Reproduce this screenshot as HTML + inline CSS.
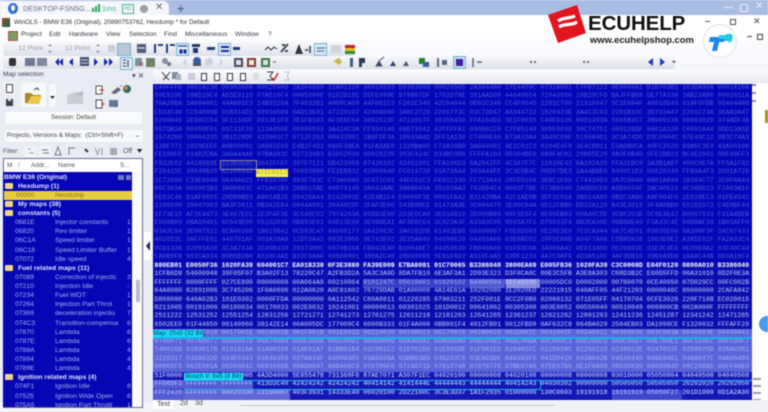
<!DOCTYPE html>
<html><head><meta charset="utf-8"><style>
html,body{margin:0;padding:0;width:768px;height:412px;overflow:hidden;background:#f3f4f8}
#w{position:absolute;left:0;top:0;width:768px;height:412px;overflow:hidden;filter:blur(.45px);font-family:"Liberation Sans",sans-serif;color:#333}
.a{position:absolute;white-space:nowrap}
.m{font-size:6.700px;color:#3a3a44;top:31px}
.h{position:absolute;left:153px;width:599px;overflow:hidden;margin:0}
.h pre{margin:0 0 0 1.500px;font:6.57px/8.48px "Liberation Mono",monospace}
.t{position:absolute;left:0;width:130px;height:9.13px;font-size:6.800px;line-height:9px;color:#a3b0ee;white-space:nowrap;overflow:hidden}
.t b{position:absolute;left:12px;font-weight:normal}
.t i{position:absolute;left:15px;font-style:normal}
.t u{position:absolute;left:52px;text-decoration:none;width:68px;overflow:hidden}
.t s{position:absolute;left:124px;text-decoration:none}
.g{color:#dde2fb;font-weight:bold}
.g i{left:15px}
.f{position:absolute;left:2px;top:1px;width:8px;height:6px;background:#f0d884;border-radius:1px}
</style></head><body><div id="w">
<div class="a" style="left:0;top:0;width:768px;height:15px;background:#a9bde3"></div>
<div class="a" style="left:0;top:1px;width:169px;height:15px;background:#f4f6fb;border-radius:0 6px 0 0"></div>
<div class="a" style="left:0;top:15px;width:768px;height:15px;background:#fff"></div>
<div class="a" style="left:0;top:30px;width:768px;height:42px;background:linear-gradient(#fff,#f4f6fc)"></div>
<div class="a" style="left:8px;top:3px;width:10px;height:11px;border-radius:50%;background:#2a6fe0"></div>
<div class="a" style="left:11px;top:5px;width:4px;height:6px;border-radius:50%;background:#fff"></div>
<div class="a" style="left:23px;top:4px;font-size:7.300px;color:#5f6a80">DESKTOP-FSN5G...</div>
<div class="a" style="left:92px;top:8px;width:2px;height:4px;background:#2fa558"></div><div class="a" style="left:95px;top:6px;width:2px;height:6px;background:#2fa558"></div><div class="a" style="left:98px;top:4px;width:2px;height:8px;background:#2fa558"></div>
<div class="a" style="left:102px;top:4px;font-size:7.500px;color:#3bb56c">1ms</div>
<div class="a" style="left:122px;top:4px;width:10px;height:8px;border:1px solid #3bb59c;font-size:5px;line-height:8px;color:#3bb56c;text-align:center">HD</div>
<div class="a" style="left:140px;top:5px;width:8px;height:8px;border-radius:50%;background:#9aa0aa"></div>
<div class="a" style="left:155px;top:2px;font-size:10px;color:#666">✕</div>
<div class="a" style="left:177px;top:1px;font-size:13px;font-weight:bold;color:#5f6f90">+</div>
<div class="a" style="left:724px;top:7px;width:9px;height:1px;background:#eef"></div>
<div class="a" style="left:740px;top:4px;width:6px;height:6px;border:1px solid #eef"></div>
<div class="a" style="left:755px;top:1px;font-size:10px;color:#eef">✕</div>
<div class="a" style="left:2px;top:18px;width:8px;height:9px;background:linear-gradient(135deg,#b33,#463 60%,#246)"></div>
<div class="a" style="left:14px;top:19px;font-size:6.400px;color:#333">WinOLS - BMW E36 (Original), 20890753762, Hexdump * for Default</div>
<div class="a" style="left:705px;top:21px;width:5px;height:1px;background:#555"></div>
<div class="a" style="left:730px;top:19px;width:4px;height:4px;border:1px solid #555"></div>
<div class="a" style="left:753px;top:16px;font-size:9px;color:#444">✕</div>
<div class="a" style="left:8px;top:31px;width:8px;height:8px;background:#7c9c5c;border:1px solid #a55"></div>
<div class="a m" style="left:21px">Project</div><div class="a m" style="left:49px">Edit</div><div class="a m" style="left:69px">Hardware</div><div class="a m" style="left:106px">View</div><div class="a m" style="left:129px">Selection</div><div class="a m" style="left:164px">Find</div><div class="a m" style="left:185px">Miscellaneous</div><div class="a m" style="left:235px">Window</div><div class="a m" style="left:268px">?</div>
<div class="a" style="left:3px;top:42px;width:352px;height:14px;background:linear-gradient(#f6f7fb,#dfe2ea);border-radius:3px"></div>
<div class="a" style="left:3px;top:56px;width:672px;height:13px;background:linear-gradient(#f7f8fc,#dcdfe8);border-radius:3px"></div>
<div class="a" style="left:18px;top:45px;font-size:6.800px;color:#999">12 Point</div><div class="a" style="left:65px;top:45px;font-size:6.800px;color:#999">12 Point</div>
<svg class="a" style="left:0;top:0" width="768" height="84" viewBox="0 0 768 84">
<g fill="#888"><path d="M48 46l2-2 2 2zM48 51l2 2 2-2zM96 46l2-2 2 2zM96 51l2 2 2-2z"/></g>
<g fill="#c8cdd8"><rect x="108" y="45" width="7" height="7"/></g>
<rect x="117.500" y="43.500" width="13" height="12" fill="#bcc7d8" stroke="#6eb4d2"/>
<rect x="137" y="44" width="9" height="9" fill="#52607e"/><path d="M138 48h7" stroke="#fff"/>
<g fill="#233c70"><rect x="154" y="44" width="2" height="9"/><rect x="158" y="44" width="5" height="2"/><rect x="166" y="44" width="2" height="9"/><rect x="170" y="44" width="5" height="2"/><rect x="192" y="44" width="8" height="3"/><rect x="193" y="48" width="5" height="5"/><rect x="207" y="47" width="8" height="3"/><rect x="218" y="47" width="6" height="3"/><rect x="233" y="47" width="7" height="3"/></g>
<rect x="176.500" y="43.500" width="12" height="12" fill="#dbe5f2" stroke="#6eb4d2"/><path d="M178 46h9M180 50h2v3h-2zM184 50h2v3h-2z" stroke="#142a90" fill="#142a90"/>
<rect x="218.500" y="43.500" width="12" height="12" fill="#dbe5f2" stroke="#6eb4d2"/><path d="M221 47h8M221 51h8" stroke="#1a2aa0" stroke-width="2"/>
<path d="M265 50l3-3 3 3 3-3 3 2" stroke="#233" fill="none"/>
<path d="M281 52l7-8M282 45h3M285 51h3" stroke="#445" stroke-width="2"/><path d="M295 54l4-10 4 10z" fill="#334" />
<path d="M305 50h3M310 46v7" stroke="#334" stroke-width="1.500"/>
<rect x="314.500" y="43.500" width="12" height="12" fill="#dbe5f2" stroke="#6eb4d2"/><path d="M317 48h8M317 51h7" stroke="#3b5a90"/>
<rect x="331" y="45" width="10" height="8" fill="#d0d2d8"/>
<path d="M345 45h10v3h-10z" fill="#c82020"/><path d="M345 48h10v3h-10z" fill="#e0c020"/><path d="M345 51h10v3h-10z" fill="#2a8a3a"/>
<rect x="9" y="58" width="7" height="8" rx="2" fill="#333"/><rect x="25" y="58" width="10" height="8" fill="#6e7a96"/><rect x="37" y="58" width="10" height="8" fill="#7d879e"/>
<g fill="#1428a8"><path d="M55 62l4-4v8zM59 62l4-4v8zM69 62l4-4v8z"/><path d="M94 58l4 4-4 4zM104 58l4 4-4 4zM109 58l4 4-4 4z"/></g>
<rect x="80" y="57" width="9" height="9" fill="#4a5878"/><path d="M81 60h7M81 63h7" stroke="#ccd"/>
<rect x="120.500" y="57.500" width="12" height="12" fill="#dfe8f2" stroke="#6eb4d2"/><path d="M123 60h3M123 63h3M123 66h3M128 60v7" stroke="#233a60"/>
<rect x="135" y="58" width="7" height="8" fill="#7d92a2"/><circle cx="141" cy="64" r="2" fill="#a67"/>
<rect x="146" y="58" width="9" height="9" fill="#6e8468"/>
<circle cx="165" cy="61" r="3" fill="#8492a8"/><circle cx="169" cy="64" r="2" fill="#778"/>
<path d="M183 62l3-4v8z" fill="#ccd"/><circle cx="197" cy="61" r="4" fill="#3a5aa0"/><rect x="193" y="63" width="8" height="3" fill="#4a5468"/><circle cx="209" cy="62" r="4" fill="#d0d2d8"/><path d="M220 58l3 4-3 4z" fill="#ccd"/>
<rect x="234" y="58" width="9" height="9" fill="#4a4a5a"/><rect x="236" y="60" width="5" height="5" fill="#dde"/>
<rect x="247" y="58" width="9" height="9" fill="#883a34"/><rect x="249" y="60" width="5" height="5" fill="#eed"/>
<rect x="261" y="58" width="9" height="9" fill="#3c7a44"/><rect x="263" y="60" width="5" height="5" fill="#dde"/>
<path d="M273 62h3" stroke="#555"/>
<path d="M333 61l6-3 3 4-3 3-3-2z" fill="#c8b848"/><path d="M350 58h3v9h-3z" fill="#3a6a7a"/><path d="M359 58h6v5h-3v4h-3z" fill="#2a3a5a"/>
<path d="M376 66l3-5 3 5zM379 61l5-4" fill="#2a4a9a" stroke="#556"/><path d="M390 66l3-5 3 5z" fill="#2a3a6a"/><path d="M403 66l3-5 3 5z" fill="#4a5a7a"/>
<rect x="419" y="58" width="6" height="6" fill="#2a7a3a"/><rect x="423" y="62" width="6" height="5" fill="#3a5a9a"/>
<path d="M437 58h2v9h-2zM442 60h5v5h-5z" fill="#5a6a80"/>
<rect x="453.500" y="56.500" width="12" height="12" fill="#c8d8ea" stroke="#6eb4d2"/><rect x="456" y="59" width="7" height="7" fill="#4020b0"/>
<path d="M473 58v9M477 62h5" stroke="#556a80" stroke-width="1.500"/>
<path d="M648 62l5-4v8z" fill="#1a3ac0"/><path d="M660 58l5 4-5 4z" fill="#1a3ac0"/><path d="M672 61h4l-2 2z" fill="#333"/>
<g fill="#667"><rect x="530" y="61" width="2" height="2"/><rect x="534" y="61" width="2" height="2"/><rect x="583" y="61" width="2" height="2"/><rect x="587" y="61" width="2" height="2"/></g>
</svg>
<div class="a" style="left:0;top:70px;width:153px;height:332px;background:#e9ecf3"></div>
<div class="a" style="left:3px;top:71px;font-size:6.600px;color:#444">Map selection</div>
<div class="a" style="left:132px;top:71px;font-size:7.500px;color:#444">▾ ✕</div>
<div class="a" style="left:153px;top:70px;width:615px;height:13px;background:linear-gradient(#fbfcfe,#e5e8f0)"></div>
<svg class="a" style="left:153px;top:70px" width="260" height="13" viewBox="153 70 260 13">
<path d="M162 72l4 5 4-5M163 80l3-3 3 3" stroke="#334" fill="none"/><rect x="172" y="72" width="6" height="7" fill="#7d8aa0"/><rect x="176" y="74" width="5" height="6" fill="#a8b0c0"/><rect x="188" y="73" width="7" height="7" fill="#ccd"/>
<g fill="#fff" stroke="#334"><rect x="201.500" y="73.500" width="5" height="7"/><rect x="214.500" y="73.500" width="5" height="7"/><rect x="227.500" y="73.500" width="5" height="7"/><rect x="240.500" y="73.500" width="5" height="7"/></g><rect x="253" y="73" width="6" height="7" fill="#d8dae2"/>
<path d="M267 72h6l-3 4 3 4h-6" stroke="#334" fill="none"/><path d="M272 78l2 2 4-7" stroke="#d02020" fill="none" stroke-width="1.500"/><path d="M284 72h5l-2 4 2 4h-5" stroke="#bbc" fill="none"/>
</svg>
<!-- session panel -->
<svg class="a" style="left:0;top:82px" width="153" height="30" viewBox="0 82 153 30">
<rect x="4" y="82" width="10" height="13" fill="#f4f5f9"/><rect x="6.500" y="84.500" width="6" height="8" fill="#fff" stroke="#444"/>
<rect x="6" y="99" width="7" height="7" fill="#3a4250"/><rect x="8" y="99" width="3" height="2" fill="#ddd"/>
<rect x="21" y="83" width="25" height="24" rx="2" fill="#f8f9fb"/><path d="M25 103v-10h6l2 2h8v2h-8l-3 6z" fill="#a88a20"/><path d="M27 104l4-8h11l-3 8z" fill="#ecc850"/><path d="M34 90l3-2 2 2" stroke="#333" fill="none"/>
<rect x="49" y="84" width="7" height="23" rx="2" fill="#f8f9fb"/><path d="M50 96h5l-2.500 3z" fill="#333"/>
<path d="M67 104v-9l8-3h8v12z" fill="#c8ccd4"/><path d="M75 95l8-4v4" fill="#b0b4bc"/>
<rect x="96" y="86" width="6" height="8" fill="#fff" stroke="#554"/><path d="M99 90h5" stroke="#c33"/>
<path d="M111 93l7-6 3 3-6 4z" fill="#667"/><path d="M120 86h2" stroke="#d44"/>
<circle cx="127" cy="89" r="4" fill="#2a6a5a"/><circle cx="126" cy="88" r="2" fill="#c85"/>
<rect x="96" y="100" width="6" height="8" fill="#fff" stroke="#445"/><path d="M102 102l3 2-3 2z" fill="#b64"/>
<rect x="109" y="100" width="9" height="7" fill="#6a7a90"/><rect x="115" y="104" width="3" height="3" fill="#37a"/>
</svg>
<div class="a" style="left:5px;top:112px;width:137px;height:12px;background:#fafbfd;border-radius:2px;font-size:6.200px;line-height:12px;text-align:center;color:#444">Session: Default</div>
<div class="a" style="left:5px;top:130px;width:138px;height:12px;background:#f8f9fc;border:0;font-size:6.300px;line-height:12px;color:#444;overflow:hidden">&nbsp;Projects, Versions &amp; Maps: &nbsp;(Ctrl+Shift+F)<span style="position:absolute;right:3px;top:0">⌄</span></div>
<div class="a" style="left:3px;top:148px;font-size:6.400px;color:#555">Filter:</div>
<svg class="a" style="left:25px;top:146px" width="120" height="12" viewBox="25 146 120 12"><g fill="#f2f4f8"><rect x="25" y="146" width="11" height="11"/><rect x="40" y="146" width="11" height="11"/></g><path d="M28 149h3M29 153h5" stroke="#99a"/><path d="M42 150h6M43 153h6" stroke="#778"/><path d="M55 155l3-8 3 8z" fill="none" stroke="#778"/><path d="M69 155v-7h6" fill="none" stroke="#778"/><path d="M85 149l3 3" stroke="#334" stroke-width="2"/><path d="M95 148l3 7M100 148l-3 7M102 148v7" stroke="#99a"/><rect x="110" y="148" width="7" height="7" fill="#aab"/><path d="M137 149h5l-2.500 4z" fill="#222"/></svg>
<div class="a" style="left:123px;top:148px;font-size:7px;color:#555">Off</div>
<!-- list -->
<div class="a" style="left:3px;top:158px;width:140px;height:16px;background:#fff;box-shadow:inset 1px 1px 0 #6a6a98,inset -1px 0 0 #6a6a98"></div>
<div class="a" style="left:3px;top:172px;width:129px;height:235px;background:#0606b4"></div>
<div class="a" style="left:132px;top:172px;width:11px;height:235px;background:#fafbfd;border-right:1px solid #6a6a98;box-sizing:border-box"></div>
<div class="a" style="left:136px;top:280px;width:4px;height:22px;background:#b8bcc4"></div>
<div class="a" style="left:3px;top:407px;width:140px;height:1px;background:#6a6a98"></div>
<div class="a" style="left:7px;top:162px;font-size:6.400px;color:#555">M</div><div class="a" style="left:18px;top:162px;font-size:6.400px;color:#777">/</div><div class="a" style="left:31px;top:162px;font-size:6.400px;color:#555">Addr...</div><div class="a" style="left:58px;top:162px;font-size:6.400px;color:#555">Name</div><div class="a" style="left:120px;top:162px;font-size:6.400px;color:#555">S...</div>
<div class="a" style="left:3px;top:172.500px;width:129px;height:234px;overflow:hidden">
<div class="t g" style="top:0"><span style="position:absolute;left:1px">BMW E36 (Original)</span></div>
<div class="a" style="left:115px;top:2px;width:6px;height:5px;background:#7078c0"></div><div class="a" style="left:123px;top:2px;width:5px;height:5px;background:#7078c0"></div>
<div class="t g" style="top:9.130px"><span class="f"></span><i>Hexdump (1)</i></div>
<div class="t" style="top:18.260px;background:#e6ce3e;color:#8a7414;left:1px;width:128px"><b>00000</b><u style="color:#8a7414;left:51px">Hexdump</u></div>
<div class="t g" style="top:27.390px"><span class="f"></span><i>My maps (38)</i></div>
<div class="t g" style="top:36.520px"><span class="f"></span><i>constants (5)</i></div>
<div class="t" style="top:45.650px"><b>0681E</b><u>Injector constants</u><s>1</s></div>
<div class="t" style="top:54.780px"><b>06820</b><u>Rev limiter</u><s>1</s></div>
<div class="t" style="top:63.910px"><b>06C1A</b><u>Speed limiter</u><s>1</s></div>
<div class="t" style="top:73.040px"><b>06C18</b><u>Speed Limiter Buffer</u><s>1</s></div>
<div class="t" style="top:82.170px"><b>07072</b><u>Idle speed</u><s>4</s></div>
<div class="t g" style="top:91.300px"><span class="f"></span><i>Fuel related maps (11)</i></div>
<div class="t" style="top:100.430px"><b>07089</b><u>Correction of injectic</u><s>3</s></div>
<div class="t" style="top:109.560px"><b>07210</b><u>Injection Idle</u><s>-</s></div>
<div class="t" style="top:118.690px"><b>07234</b><u>Fuel WOT</u><s>1</s></div>
<div class="t" style="top:127.820px"><b>07264</b><u>Injection Part Throt</u><s>1</s></div>
<div class="t" style="top:136.950px"><b>07369</b><u>deceleration injectio</u><s>7</s></div>
<div class="t" style="top:146.080px"><b>074C3</b><u>Transition-compensa</u><s>6</s></div>
<div class="t" style="top:155.210px"><b>07870</b><u>Lambda</u><s>6</s></div>
<div class="t" style="top:164.340px"><b>0787E</b><u>Lambda</u><s>6</s></div>
<div class="t" style="top:173.470px"><b>0788A</b><u>Lambda</u><s>4</s></div>
<div class="t" style="top:182.600px"><b>07894</b><u>Lambda</u><s>4</s></div>
<div class="t" style="top:191.730px"><b>0789E</b><u>Lambda</u><s>4</s></div>
<div class="t g" style="top:200.860px"><span class="f"></span><i>Ignition related maps (4)</i></div>
<div class="t" style="top:209.990px"><b>074F1</b><u>Ignition Idle</u><s>8</s></div>
<div class="t" style="top:219.120px"><b>07525</b><u>Ignition Wide Open</u><s>6</s></div>
<div class="t" style="top:228.250px"><b>075A5</b><u>Ignition Part Throttl</u><s>1</s></div>
</div>
<!-- splitter -->
<div class="a" style="left:144px;top:232px;width:7px;height:28px;background:#fff"></div>
<svg class="a" style="left:144px;top:240px" width="7" height="12"><path d="M2 6l4-5v10z" fill="#1a2a50"/></svg>
<!-- hex -->
<div class="h" style="top:83.500px;height:178.080px;background:#0505b6;color:#4c5ed6"><pre>EA0FFFD 38010238 D9303888 00026909 2A304880 32A01220 38010533 D9303888 00026585 2A304480 17E4459C 0732A901 C7FB7122 0E0004A1 B1B703B1 103DA90A 0001A10A
59E910E 20A510C4 A55E9110 07A510C4 0005899E 0102D18E D5FE999E B79807DF 1702D78E 361AAD09 44640654 71043850 10B29CFD BAJFFB08 DE77A338 3AB23A80 0002651A
70A20BA 3A604001 44A801C3 24B9320A 7F4032B1 4000CA69 44F001C3 F201C340 42C04044 0E01C340 CC4F0045 2201C700 21310047 5C1E684F 40010D40 018F0FDB 0D404486
CD33C40 CC54689B 01B314D1 99934508 0AD13E01 47220107 4240A000 3A6C2720 2201773C 01C73D47 A6344722 1520423E 3A4C3C03 2201B33C 3D733A47 2201C73A 3EA83A47
9200045 3E00CC54 3F1134DF D013E1F9 3E1FB103 AF3E6C64 3002523F 4721017F 38356430 FFA104D3 3E1F9035 C40FD136 0091393A 5665B3C7 3B009138 00883020 374ADF3A
907DB3A 00450E01 01C31F20 113A450E 00006533 3A424C3A FF934140 06D73542 42FFFFA1 090D0220 C7F85140 305E9038 39C74751 409126DF 0601A338 C0091A44 0DD13A5D
1574200 38004335 3B1528DF 433001C7 5712F203 00433901 1B0FDF3A 10033A4D DFF1A130 C7400E40 B73A33A4 3A40C09F 5190A9D1 3C3A74D0 D3C0904C 07E40C12 0B3C74A3
138F771 1920EEEF A0B90091 3A001E89 E4B1F4D1 060F38EA 91FA3AE0 1320BA90 C73A38B0 3A604001 4E1C01C3 0204E4F9 3E4C0011 E3A0B0CA 40FC3520 B0A5C3E0 43A00100
FE100FE 014B2CBA 3A0A44A8 07BA383C 027239B3 B3052030 0D028239 353C424C D33BC096 FFFFA104 0D304BE0 0A9F4C02 29B85E20 0A3F0B40 9FE2BB23 BC4E2001 0DF49FF3
F932E02 442A583E 11383E6C 3042FFEF 397F7121 DB423068 67420102 42451001 FFA106D3 0A2042FF 4C3A7F7C 11030E43 0A102A35 FFA1EBC0 3A3B1A97 400C0E7A FF5A1F02
F26415C 38640B35 A1100342 A71C01C7 76883800 FE1E8832 42000640 FC014738 01A73844 303A44FE 3C3E0B4C 00D67DE3 1A44B8E0 6400C1E3 05620340 FFB0A4F3 2D01A720
1C73560 C33E6040 0A44A821 FFB1070F 393C783C C73A00A5 3C471C01 44FC01C3 FE01C330 FC713A44 28FE0108 3E0C1E66 C74420D3 3A7C0040 6001A840 1B384C77 2C0F0A44
09C303A 003901B3 3A00883C 471A01B3 20B617AE 00074145 3A643AAE 3A68643A 38103AA3 743584C4 0003F7BE 073B6940 2A0D9CE8 A5E0034F 2AC40E21 4C380D13 F2A03A10
0E03C46 B1AF9855 20D90BD3 A8014B2E 89420A44 D142001E 42E4B1F4 E0060F3E 0091FA42 B31420BA 42C1AE0B 3EF1C01A 3B014A85 0B2C3A60 A8F904F0 2E010EC3 01FE4D42
1180599 38047903 BA3F3811 0B3A3E64 0044A001 38440CDF 3FAF3E60 543E00CE 01473A3E 3C004476 3E00C04A 6D12CBB0 DD33A120 B43E3019 3F4A0BB8 E01D1073 C4E0BF44
1C73E15 AF3E4473 3E467E01 2E3FAF3E 3C648C02 7974203A 05D93E00 203E6CA0 3E010810 3E000B89 00F3E5F4 8E00EB03 00A40C5E 3CBF203E 0C0E3E42 B0007933 F31A4DEB
E000B09 0BA10401 6C643E00 0510203E 0B893E01 04D13E00 3E000EA1 AF3E6C64 3C023A3F A33A3C65 9503A7F1 D79033F4 0D3EA30E 00B5DE40 F3A33C4E 00D9AF30 1B03AFF0
03A3C64 3E007922 6CA00309 1B019B42 0CD93C47 44660177 3A42663C 3A0102DB 61403EB0 08400007 F5E0D503 0E20E3E0 7E3CA344 0A7C4E01 03030E00 8A300F3F 3AC07433
A02053C 3AFFFE61 446701AF 003A38A6 12D53A42 093E3866 3E743E02 3E35A040 04690620 04493A00 03E6BC02 29F5E80B A04F7A06 C5B8DA38 1063E0E2 A3A5E01F FA2A33C4
0CD133A 02093A38 3C3A743A 2E49B438 3937380C 0670B10A FB042EA0 B10046E7 04450630 FB040A00 01F03C0A 3A000A42 0E013A0D 0E20903E 01E3C4E6 0E09E0A2 63C40C44
CA0B9FB 963CA034 B0B5B3B0 A510C4A5 B33C0AA0 00600001 380A2C48 28000089 5E91F6D3 A510C4A5 33DF1233 4A7C9AF6 4D3A510C 4AF3DB10 39B0A9D8 18AAC44B 0D3A10C4
2BA3EC3 B93DE520 BF71FAFB 3C0E8DA6 33C0A3B1 E0D40401 F6D3A510 C4A54F04 01D3A510 C4A5E800 0C96A32F 4DA0B340 0E01BD2F 5C3A98F0 40CE10C4 A51F3DB0 C63B40FA</pre></div>
<div class="h" style="top:261.580px;height:67.840px;background:#0a0eb0;color:#c4ccf6"><pre><span style="color:#fff;font-weight:bold">880EB01 E0050F36 1020FA39 604001C7 EA01B338 0F3E3880 FA39E009 E7BA8091 01C70065 B3386040 3800EA69 E005FB36 1020FA39 C3C0008D E04F0120 0800A010 B3386040</span>
1CFB6D9 54000948 39F05F07 B3A02F13 78220C47 A2FB3D2A 5A3C3A9D 8DA7FB10 6E3AF3A1 2D93E323 D3F8CA0C 00E3C5FB A3E8A303 C08D3B2C E60D5FFD 00A31010 0D2F0E3A
FFFFFFF 0000FFFF 027CE800 00000008 00A064A8 00210064 0101247C 05010601 01020102 B4400504 D1F46590 00005DC0 D0002000 00780070 0CE40050 07D029CC 00FC002B
64A8080 82891096 3C745206 1F0A0696 022A0620 A8C81602 76728DAB 01A00008 4A14E61A 10202080 1E2020ED 22221915 040AFF05 44F21203 0800046C 80000000 2CAFA842
D808080 640A02B3 101E0302 0000FFDA 00000000 0A112542 C80A0811 01220285 07903211 252F081E 0CC2F0B0 02060132 071E05FF 04170704 0CFE3026 220F716B EC020015
0211005 00191006 00180034 00170033 002E0032 10241001 00080013 00301025 101D0012 00641002 00305300 003E0052 00550040 00510049 009800CB 002A000F FFFFFFFF
2511222 12531252 12551254 12831256 12721271 12741273 12761275 12611218 12181263 12641265 12361237 12621262 12891283 12411236 12451287 12341242 12471285
6502EE0 01F44650 00140960 38142E14 00A005DC 177009C4 6000B333 01F4A000 0BB801F4 4012FB01 9012FBD9 0AF632C8 964BA029 2584EB03 DA1998CE F1320032 FFFAFF29</pre></div>
<div class="h" style="top:329.420px;height:42.400px;background:#5a63da;color:#a9b4f0"><pre>0000000 00000018 0017001E 0019001B 001C001B 001E001D 00210020 00240023 00270026 002A0029 002D002C 0031002F 00340032 00360036 003C003A 0040003E 00440042
0740071 007A0077 0080007D 00870084 008E008A 00950092 009D0099 00A400A1 00AD00A9 00B500B1 00BE00BA 00C900C3 00D200CD 00DC00D7 00E700E1 00F100EC 00FC00F7
740016D 0183017B 0191018A 01A00198 01AE01A7 01BB01B4 01C901C2 01D701D0 01E501DE 01F501ED 020401FC 0215020C 0225021D 0236022E 0247023F 0258025D 026A0261
3220317 0338032D 034E0343 03640359 037A034F 03900385 03A5039A 03BB03B0 03D203C6 03EA03DE 040303F6 041D0410 0438042B 04530446 046E0461 048A047C 04A90499
60805F5 062E061A 06560642 0681066B 06AD0697 06D406C3 070706F0 0724071D 07610748 07870778 07BE07A6 07EE07D6 0E1F0806 08530839 0869084D 08C208A5 06FF06E0</pre></div>
<div class="h" style="top:371.820px;height:28.180px;background:#1418b6;color:#dfe4ff"><pre>51F0000 00000000 00000005 4A3D4000 5E855478 731368F6 87AE7071 A307F1EC 04020100 08000808 04020100 08000808 08000808 03010000 05050804 04040508 04040508
FFD8SF3 FFFFFFFF FFFFFFFF 413D3C40 42424242 42424242 40414142 4141444E 44444443 44444444 40414243 04030302 90909090 50505050 50505050 20202020 20202050
FFF2420 FFFFFFFF 04020100 23160007 403F3931 14333E40 06020100 2D22160C 3C3E3D37 1A1F2935 01000000 130C0603 19191918 19191919 05050F27 201D1009 0D1A2A30</pre></div>
<!-- overlays -->
<div class="a" style="left:220px;top:160px;width:35px;height:8px;border:1px solid #8a8a98;background:rgba(60,70,200,.2)"></div>
<div class="a" style="left:256px;top:168.500px;width:32px;height:8px;background:#f4ee52;color:#a8a030;font:6.57px/8px 'Liberation Mono',monospace">A71C01C7</div>
<div class="a" style="left:363px;top:279px;width:142px;height:8.500px;background:rgba(140,150,240,.35)"></div>
<div class="a" style="left:470px;top:279px;width:35px;height:8.500px;background:rgba(150,160,240,.3)"></div>
<div class="a" style="left:506px;top:279px;width:34px;height:8.500px;background:rgba(200,205,250,.65)"></div>
<div class="a" style="left:153px;top:330px;width:50px;height:8px;background:#18e0f0;color:#0a3a70;font:6.4px/8px 'Liberation Sans',sans-serif">Map: 25x5 (32 Bit)</div>
<div class="a" style="left:153px;top:337px;width:599px;height:2px;background:#1ab0ea"></div>
<div class="a" style="left:184px;top:373px;width:59px;height:7px;background:#18e0f0;color:#0a3a70;font:6.4px/7px 'Liberation Sans',sans-serif">&nbsp;Bosch II: 8x5 (8 Bit)</div>
<div class="a" style="left:184px;top:380px;width:568px;height:1px;background:#1ab0ea"></div>
<div class="a" style="left:153px;top:380px;width:31px;height:9px;background:rgba(150,160,245,.5)"></div>
<div class="a" style="left:184px;top:381px;width:69px;height:8px;background:rgba(150,160,245,.5)"></div>
<div class="a" style="left:184px;top:389px;width:357px;height:1px;background:#1ab0ea"></div>
<div class="a" style="left:540px;top:380px;width:1px;height:9px;background:#1ab0ea"></div>
<div class="a" style="left:153px;top:390px;width:31px;height:10px;background:rgba(150,160,245,.5)"></div>
<div class="a" style="left:184px;top:390px;width:106px;height:10px;background:rgba(170,180,250,.5)"></div>
<div class="a" style="left:612px;top:390px;width:70px;height:10px;background:rgba(150,160,245,.35)"></div>
<!-- right edge -->
<div class="a" style="left:752px;top:83px;width:16px;height:319px;background:#fff"></div>
<div class="a" style="left:765px;top:110px;width:3px;height:13px;background:#a88f20"></div>
<div class="a" style="left:752px;top:84px;width:4px;height:24px;background:repeating-linear-gradient(#88a 0 2px,#fff 2px 8px)"></div>
<div class="a" style="left:759px;top:316px;width:9px;height:16px;background:#4a9ae8;border-radius:8px 0 0 8px"></div>
<div class="a" style="left:753px;top:378px;width:8px;height:22px;background:repeating-linear-gradient(#99a 0 2px,#fff 2px 7px)"></div>
<!-- tabs -->
<div class="a" style="left:153px;top:400px;width:615px;height:12px;background:#f1f2f5"></div>
<div class="a" style="left:153px;top:400px;width:21px;height:9px;background:#fff;font-size:7px;line-height:9px;text-align:center;color:#444">Text</div>
<div class="a" style="left:180px;top:400px;font-size:7px;color:#555">2d</div><div class="a" style="left:195px;top:400px;font-size:7px;color:#555">3d</div>
<div class="a" style="left:240px;top:405px;width:315px;height:1px;background:#c8c8c8"></div>
<!-- logo -->
<svg class="a" style="left:540px;top:0" width="56" height="48" viewBox="540 0 56 48"><path d="M548 15l29-10 9 28-28 10z" fill="#e2141e"/><path d="M558 21c6-4 10-2 17-5M559 27c6-4 12-1 18-5" stroke="#fff" stroke-width="3.200" fill="none"/></svg>
<div class="a" style="left:588px;top:12px;font-family:'Liberation Sans',sans-serif;font-weight:bold;font-size:20.500px;line-height:24px;color:#111;letter-spacing:-.1px">ECUHELP</div>
<div class="a" style="left:590px;top:34px;font-weight:bold;font-size:9.400px;line-height:12px;color:#1a1a1a">www.ecuhelpshop.com</div>
<div class="a" style="left:703px;top:24px;width:34px;height:34px;border-radius:50%;background:#fff;border:1px solid #dfe2e8;box-sizing:border-box"></div>
<svg class="a" style="left:703px;top:24px" width="34" height="34" viewBox="703 24 34 34"><path d="M710 37h15l-1 5h-5l-2 9h-5l2-9h-5z" fill="#1a86e8"/><path d="M719 35h14l-1 6-4 2 1-4h-10z" fill="#2ccbe6"/><path d="M726 34h6l-2 7h-6z" fill="#1fc8e0"/></svg>
<div class="a" style="left:747px;top:36px;width:5px;height:1px;background:#444"></div>
<div class="a" style="left:757px;top:34px;width:4px;height:4px;border:1px solid #444"></div>
</div></body></html>
